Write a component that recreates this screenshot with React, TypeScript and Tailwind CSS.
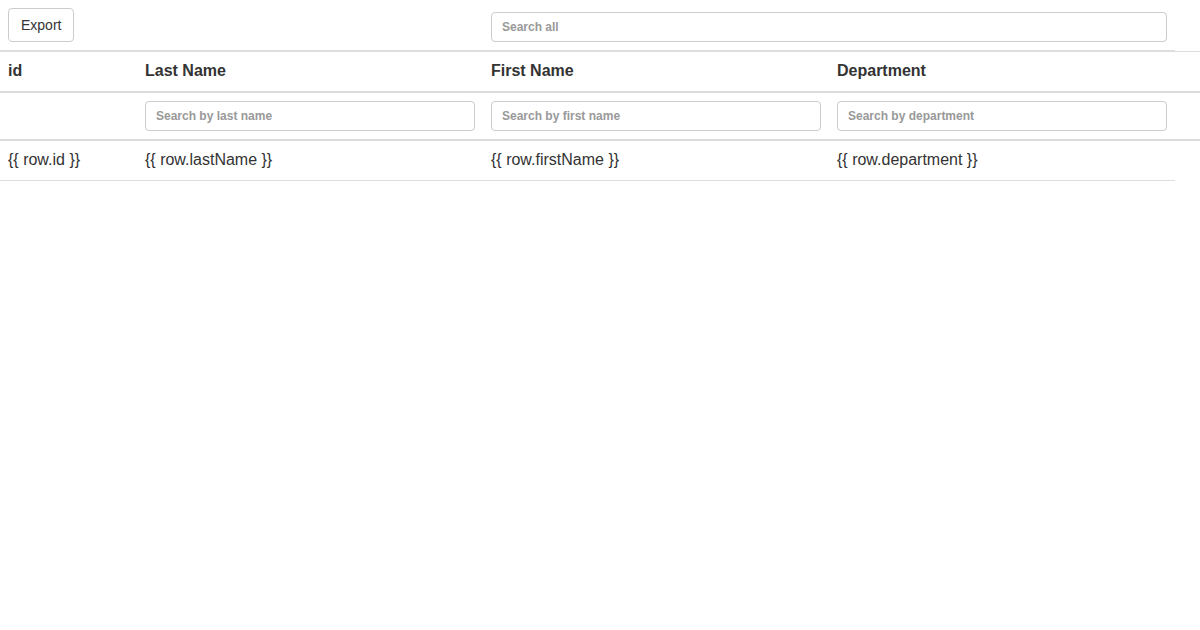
import React from "react";

const cols = [
    { key: "id", label: "id", width: "w-[137px]" },
    { key: "lastName", label: "Last Name", width: "w-[346px]", placeholder: "Search by last name" },
    { key: "firstName", label: "First Name", width: "w-[346px]", placeholder: "Search by first name" },
    { key: "department", label: "Department", width: "w-[346px]", placeholder: "Search by department" },
];

function SearchInput({ placeholder }: { placeholder: string }) {
    return (
        <input
            type="text"
            placeholder={placeholder}
            className="h-[30px] w-full rounded-[4px] border border-[#ccc] bg-white px-[10px] text-[12px] font-bold text-[#555] outline-none placeholder:text-[#999]"
        />
    );
}

export default function App() {
    return (
        <div className="min-h-[630px] w-full bg-white font-['Liberation_Sans',Arial,sans-serif] text-[#333]">
            <div className="flex h-[51px] w-[1175px] border-b border-[#ddd]">
                <div className="w-[483px] pl-[8px] pt-[8px]">
                    <button
                        type="button"
                        className="h-[34px] rounded-[4px] border border-[#ccc] bg-white px-[12px] text-[14px] leading-[20px] text-[#333]"
                    >
                        Export
                    </button>
                </div>
                <div className="w-[692px] px-[8px] pt-[12px]">
                    <SearchInput placeholder="Search all" />
                </div>
            </div>

            <div className="w-full border-t border-[#ddd]">
                <div className="flex h-[41px] w-full items-start border-b-2 border-[#ddd] pt-[8px]">
                    {cols.map((c) => (
                        <div key={c.key} className={`${c.width} px-[8px] text-[16px] font-bold leading-[22px]`}>
                            {c.label}
                        </div>
                    ))}
                </div>
                <div className="flex h-[48px] w-full items-center border-b-2 border-[#ddd]">
                    {cols.map((c) => (
                        <div key={c.key} className={`${c.width} px-[8px]`}>
                            {c.placeholder && <SearchInput placeholder={c.placeholder} />}
                        </div>
                    ))}
                </div>
            </div>

            <div className="flex h-[40px] w-[1175px] items-start border-b border-[#ddd] pt-[8px]">
                {cols.map((c) => (
                    <div key={c.key} className={`${c.width} px-[8px] text-[16px] leading-[22px]`}>
                        {`{{ row.${c.key} }}`}
                    </div>
                ))}
            </div>
        </div>
    );
}
